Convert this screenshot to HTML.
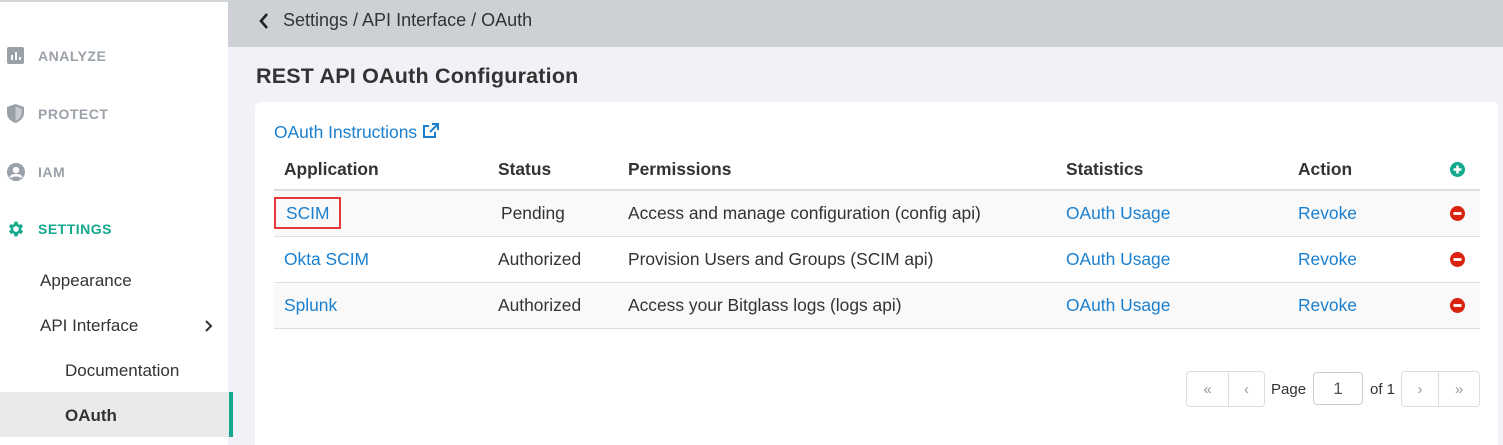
<!DOCTYPE html>
<html><head><style>
*{margin:0;padding:0;box-sizing:border-box}
html,body{width:1503px;height:445px;overflow:hidden}
body{font-family:"Liberation Sans",sans-serif;background:#f1f1f8;position:relative}
.side{position:absolute;left:0;top:0;width:228px;height:445px;background:#fff;border-top:2px solid #d4d7da}
.nav{position:absolute;left:38px;font-size:14px;font-weight:bold;letter-spacing:.5px;color:#9aa1a8}
.ic{position:absolute;left:7px}
.sub{position:absolute;font-size:17px;color:#333}
.top{position:absolute;left:228px;top:0;width:1275px;height:47px;background:#cdd1d5}
.a{color:#1a7fcf}
.card{position:absolute;left:255px;top:102px;width:1243px;height:343px;background:#fff;border-radius:5px 5px 0 0}
table{position:absolute;left:19px;top:48px;width:1206px;border-collapse:collapse;font-size:17.4px;color:#333}
th{text-align:left;font-weight:bold;height:40px;border-bottom:2px solid #ddd;padding-left:10px;vertical-align:middle}
td{height:46px;border-bottom:1px solid #ddd;padding-left:10px;vertical-align:middle}
td svg,th svg{display:block}
tr.g td{background:#f9f9f9}
.pg{position:absolute;top:269px;height:36px;border:1px solid #ddd;border-radius:4px;display:flex;color:#999;font-size:15px}
.pg span{display:flex;align-items:center;justify-content:center}
</style></head><body>
<div class="side">
<svg class="ic" style="top:45px" width="17" height="17"><rect x="0" y="0" width="17" height="17" rx="2" fill="#9aa1a8"/><rect x="4" y="8" width="2" height="5" fill="#fff"/><rect x="8" y="5" width="2" height="8" fill="#fff"/><rect x="12" y="10" width="2" height="3" fill="#fff"/></svg>
<div class="nav" style="top:46px">ANALYZE</div>
<svg class="ic" style="top:102px" width="17" height="19"><path d="M8.5 0L17 3V9C17 14 13 17.5 8.5 19C4 17.5 0 14 0 9V3Z" fill="#9aa1a8"/><path d="M8.5 2.5L14.5 4.7V9C14.5 13 12 15.5 8.5 16.5Z" fill="#fff" opacity=".45"/></svg>
<div class="nav" style="top:104px">PROTECT</div>
<svg class="ic" style="top:161px" width="18" height="18"><circle cx="9" cy="9" r="9" fill="#9aa1a8"/><circle cx="9" cy="7" r="3.2" fill="#fff"/><path d="M3.5 14.5C5 11.5 13 11.5 14.5 14.5" stroke="#fff" stroke-width="2.5" fill="none"/></svg>
<div class="nav" style="top:162px">IAM</div>
<svg class="ic" style="top:218px" width="18" height="18" viewBox="2 1 22 22"><path fill="#14a88e" d="M19.4 13a7.5 7.5 0 000-2l2.1-1.6-2-3.5-2.5 1a7 7 0 00-1.7-1L15 3h-4l-.4 2.9a7 7 0 00-1.7 1l-2.5-1-2 3.5L6.6 11a7.5 7.5 0 000 2l-2.1 1.6 2 3.5 2.5-1a7 7 0 001.7 1L11 21h4l.4-2.9a7 7 0 001.7-1l2.5 1 2-3.5zM13 15.5A3.5 3.5 0 1113 8.5a3.5 3.5 0 010 7z"/></svg>
<div class="nav" style="top:219px;color:#14a88e">SETTINGS</div>
<div class="sub" style="left:40px;top:269px">Appearance</div>
<div class="sub" style="left:40px;top:314px">API Interface</div>
<svg style="position:absolute;left:204px;top:317px" width="10" height="14"><path d="M2 2L7 7L2 12" stroke="#333" stroke-width="2" fill="none"/></svg>
<div class="sub" style="left:65px;top:359px">Documentation</div>
<div style="position:absolute;left:0;top:390px;width:233px;height:45px;background:#e9ebea;border-right:4px solid #14a88e"></div>
<div class="sub" style="left:65px;top:404px;font-weight:bold">OAuth</div>
</div>
<div class="top">
<svg style="position:absolute;left:30px;top:12px" width="12" height="18"><path d="M9 2L3 9L9 16" stroke="#222" stroke-width="2.6" fill="none"/></svg>
<div style="position:absolute;left:55px;top:10px;font-size:18px;color:#333">Settings / API Interface / OAuth</div>
</div>
<div style="position:absolute;left:256px;top:64px;font-size:21.5px;font-weight:bold;color:#333;letter-spacing:.2px">REST API OAuth Configuration</div>
<div class="card">
<div class="a" style="position:absolute;left:19px;top:20px;font-size:17.4px">OAuth Instructions <svg width="18" height="16" style="vertical-align:-1px"><path d="M7 3H2V14H13V9" stroke="#1a7fcf" stroke-width="2" fill="none"/><path d="M10 1H16V7M16 1L8 9" stroke="#1a7fcf" stroke-width="2" fill="none"/></svg></div>
<table>
<tr><th style="width:214px">Application</th><th style="width:130px">Status</th><th style="width:438px">Permissions</th><th style="width:232px">Statistics</th><th>Action</th><th style="width:40px"><svg width="15" height="15"><circle cx="7.5" cy="7.5" r="7.5" fill="#14a88e"/><path d="M7.5 3.5V11.5M3.5 7.5H11.5" stroke="#fff" stroke-width="2.6"/></svg></th></tr>
<tr class="g"><td><span class="a" style="outline:2px solid #e8393a;padding:4px 10px;margin-left:-8px">SCIM</span></td><td style="padding-left:13px">Pending</td><td>Access and manage configuration (config api)</td><td class="a">OAuth Usage</td><td class="a">Revoke</td><td><svg width="15" height="15"><circle cx="7.5" cy="7.5" r="7.5" fill="#d9230f"/><path d="M3.5 7.5H11.5" stroke="#fff" stroke-width="2.8"/></svg></td></tr>
<tr><td class="a">Okta SCIM</td><td>Authorized</td><td>Provision Users and Groups (SCIM api)</td><td class="a">OAuth Usage</td><td class="a">Revoke</td><td><svg width="15" height="15"><circle cx="7.5" cy="7.5" r="7.5" fill="#d9230f"/><path d="M3.5 7.5H11.5" stroke="#fff" stroke-width="2.8"/></svg></td></tr>
<tr class="g"><td class="a">Splunk</td><td>Authorized</td><td>Access your Bitglass logs (logs api)</td><td class="a">OAuth Usage</td><td class="a">Revoke</td><td><svg width="15" height="15"><circle cx="7.5" cy="7.5" r="7.5" fill="#d9230f"/><path d="M3.5 7.5H11.5" stroke="#fff" stroke-width="2.8"/></svg></td></tr>
</table>
<div class="pg" style="left:931px;width:79px"><span style="width:42px;border-right:1px solid #ddd">«</span><span style="flex:1">‹</span></div>
<div style="position:absolute;left:1016px;top:279px;font-size:15px;color:#333">Page</div>
<div style="position:absolute;left:1058px;top:270px;width:50px;height:33px;border:1px solid #ccc;border-radius:4px;text-align:center;line-height:31px;font-size:17px;color:#555">1</div>
<div style="position:absolute;left:1115px;top:279px;font-size:15px;color:#333">of 1</div>
<div class="pg" style="left:1146px;width:79px"><span style="width:37px;border-right:1px solid #ddd">›</span><span style="flex:1">»</span></div>
</div>
</body></html>
